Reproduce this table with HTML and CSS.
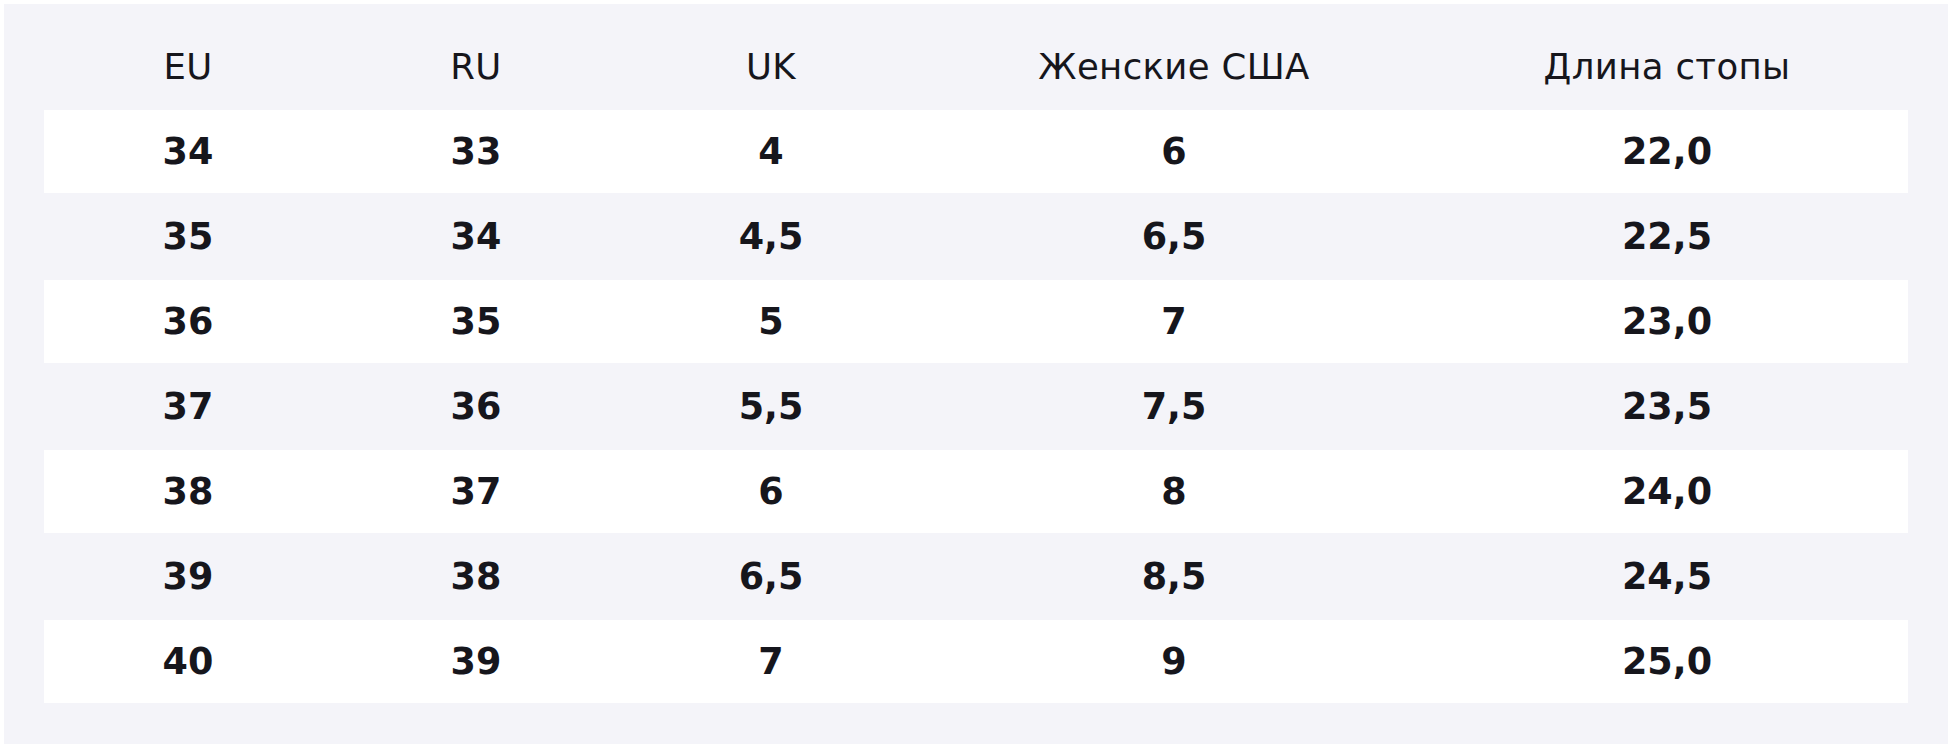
FILE: index.html
```html
<!DOCTYPE html>
<html lang="ru">
<head>
<meta charset="utf-8">
<title>Таблица размеров</title>
<link rel="stylesheet" href="styles.css">
</head>
<body>
<div class="page">
  <div class="card">
    <table class="sizes">
      <colgroup>
        <col class="c1"><col class="c2"><col class="c3"><col class="c4"><col class="c5">
      </colgroup>
      <thead>
        <tr><th>EU</th><th>RU</th><th>UK</th><th>Женские США</th><th>Длина стопы</th></tr>
      </thead>
      <tbody>
        <tr><td>34</td><td>33</td><td>4</td><td>6</td><td>22,0</td></tr>
        <tr><td>35</td><td>34</td><td>4,5</td><td>6,5</td><td>22,5</td></tr>
        <tr><td>36</td><td>35</td><td>5</td><td>7</td><td>23,0</td></tr>
        <tr><td>37</td><td>36</td><td>5,5</td><td>7,5</td><td>23,5</td></tr>
        <tr><td>38</td><td>37</td><td>6</td><td>8</td><td>24,0</td></tr>
        <tr><td>39</td><td>38</td><td>6,5</td><td>8,5</td><td>24,5</td></tr>
        <tr><td>40</td><td>39</td><td>7</td><td>9</td><td>25,0</td></tr>
      </tbody>
    </table>
  </div>
</div>
</body>
</html>
```

FILE: styles.css
```css
html, body {
  margin: 0;
  padding: 0;
  background: #ffffff;
}

.page {
  padding: 4px;
}

.card {
  background: #f4f4f9;
  padding: 21px 40px 39px;
  font-family: "DejaVu Sans", sans-serif;
  color: #16161c;
}

.sizes {
  width: 100%;
  table-layout: fixed;
  border-collapse: separate;
  border-spacing: 0;
}

.c1 { width: 288px; }
.c2 { width: 288px; }
.c3 { width: 302px; }
.c4 { width: 504px; }
.c5 { width: 482px; }

.sizes th,
.sizes td {
  height: 83px;
  padding: 0;
  text-align: center;
  vertical-align: middle;
  border-bottom: 2px solid #f4f4f9;
}

.sizes th {
  font-weight: normal;
  font-size: 35.5px;
  letter-spacing: 0.01em;
}

.sizes td {
  font-weight: bold;
  font-size: 36.5px;
}

.sizes tbody tr:nth-child(odd) td {
  background: #ffffff;
}
```
